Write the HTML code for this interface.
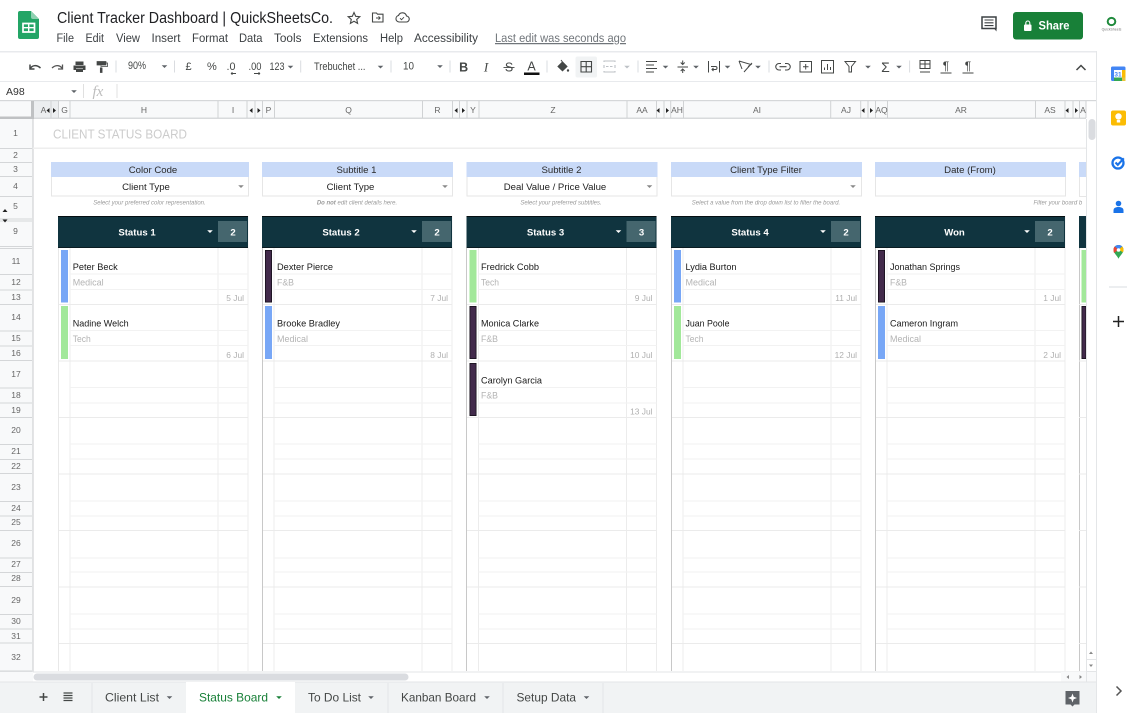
<!DOCTYPE html>
<html><head><meta charset="utf-8"><title>Client Tracker Dashboard</title>
<style>
html,body{margin:0;padding:0;width:1140px;height:713px;overflow:hidden;background:#fff}
svg{display:block;font-family:"Liberation Sans",sans-serif;filter:blur(.3px)}
.m{font-size:12.4px;fill:#3c4043}
.t{font-size:11px;fill:#444746}
.hd{font-size:8.5px;fill:#666;text-anchor:middle}
.rn{font-size:8.5px;fill:#666;text-anchor:middle}
.n{font-size:9.6px;fill:#1a1a1a}
.s{font-size:9.6px;fill:#b4b4b4}
.d{font-size:8.4px;fill:#b0b0b0;text-anchor:end}
.fh{font-size:9.6px;fill:#2a2a2a;text-anchor:middle}
.fv{font-size:9.6px;fill:#222;text-anchor:middle}
.h{font-size:6px;font-style:italic;fill:#9a9a9a;text-anchor:middle}
.bh{font-size:9.6px;font-weight:bold;fill:#fff;text-anchor:middle}
.tb{font-size:11.8px;fill:#444746}
.ic{fill:none;stroke:#444746;stroke-width:1.1}
.cr{fill:#5f6368}
</style></head><body>
<svg width="1140" height="713" viewBox="0 0 1140 713" xmlns="http://www.w3.org/2000/svg">
<defs>
<path id="c" d="M-2.800 -1.300h5.600l-2.800 2.800z"/>
<g id="col">
 <path d="M12 248V671M160 248V671M190 216V671" stroke="#ececec" fill="none"/>
 <path d="M0 304.500H190M0 361H190M0 417.500H190M0 474H190M0 530.500H190M0 587H190M0 643.500H190" stroke="#ebebeb" fill="none"/>
 <path d="M12 274H190M12 289.500H190M12 330.500H190M12 345.500H190M12 387.500H190M12 403H190M12 444H190M12 459H190M12 501H190M12 516H190M12 558H190M12 572H190M12 614H190M12 629H190" stroke="#f2f2f2" fill="none"/>
 <rect x="0" y="216" width="190" height="32" fill="#10343f"/>
 <rect x="0" y="216" width="190" height="1" fill="#050f12"/>
 <rect x="0" y="247" width="190" height="1" fill="#0a1c22"/>
 <rect x="160" y="221" width="29" height="21" fill="#45666e"/>
 <use href="#c" x="152" y="231.500" fill="#fff"/>
</g>
<g id="flt">
 <rect x="0.500" y="162.500" width="190" height="33.500" fill="#fff" stroke="#e6e6e6"/>
 <rect x="0" y="162" width="191" height="15" fill="#c9daf8"/>
</g>
</defs>

<rect width="1140" height="713" fill="#fff"/>

<!-- top -->
<path d="M20 11h11l8 8v18a2 2 0 0 1-2 2H20a2 2 0 0 1-2-2V13a2 2 0 0 1 2-2z" fill="#23a566"/>
<path d="M31 11l8 8h-6a2 2 0 0 1-2-2z" fill="#8ed1b1"/>
<path d="M23 23.500h11.500v8.500H23z" fill="none" stroke="#fff" stroke-width="1.700"/>
<path d="M28.700 23.500v8.500M23 27.700h11.500" stroke="#fff" stroke-width="1.400"/>
<text x="57" y="23" font-size="15.500" fill="#202124" textLength="276" lengthAdjust="spacingAndGlyphs">Client Tracker Dashboard | QuickSheetsCo.</text>
<path d="M354 12.500l1.700 3.800 4.100.4-3.100 2.700.9 4-3.600-2.100-3.600 2.100.9-4-3.100-2.700 4.100-.4z" class="ic"/>
<path d="M372.500 13h4l1 1.200h5.500v7.800h-10.500z" class="ic"/><path d="M376 18h4M378.500 16.300l1.700 1.700-1.700 1.700" class="ic" style="stroke-width:.9"/>
<path d="M399 22h7a3 3 0 0 0 .5-6 4.200 4.200 0 0 0-8-.5 3.300 3.300 0 0 0 .5 6.500z" class="ic"/><path d="M400 18.200l1.500 1.500 2.500-2.500" class="ic" style="stroke-width:.9"/>

<text class="m" x="56.500" y="42" textLength="17.500" lengthAdjust="spacingAndGlyphs">File</text>
<text class="m" x="85.500" y="42" textLength="18.500" lengthAdjust="spacingAndGlyphs">Edit</text>
<text class="m" x="116" y="42" textLength="24" lengthAdjust="spacingAndGlyphs">View</text>
<text class="m" x="151.500" y="42" textLength="29" lengthAdjust="spacingAndGlyphs">Insert</text>
<text class="m" x="192" y="42" textLength="36" lengthAdjust="spacingAndGlyphs">Format</text>
<text class="m" x="239" y="42" textLength="23.500" lengthAdjust="spacingAndGlyphs">Data</text>
<text class="m" x="274" y="42" textLength="27.500" lengthAdjust="spacingAndGlyphs">Tools</text>
<text class="m" x="313" y="42" textLength="55" lengthAdjust="spacingAndGlyphs">Extensions</text>
<text class="m" x="380" y="42" textLength="23" lengthAdjust="spacingAndGlyphs">Help</text>
<text class="m" x="414" y="42" textLength="64" lengthAdjust="spacingAndGlyphs">Accessibility</text>
<text class="m" x="495" y="42" textLength="131" lengthAdjust="spacingAndGlyphs" style="fill:#70757a" text-decoration="underline">Last edit was seconds ago</text>

<path d="M982 17h14v11.500h-14z" fill="none" stroke="#3c4043" stroke-width="1.500"/><path d="M994 28.500l2.500 3v-3z" fill="#3c4043"/><path d="M984.500 20h9M984.500 22.800h9M984.500 25.600h9" stroke="#3c4043" stroke-width="1.100"/>
<rect x="1013" y="12" width="70" height="27.500" rx="3" fill="#188038"/>
<rect x="1024" y="24.500" width="7.500" height="6.500" rx="1" fill="#fff"/><path d="M1025.800 24.500v-1.500a2 2 0 0 1 4 0v1.500" fill="none" stroke="#fff" stroke-width="1.100"/>
<text x="1038.500" y="29.500" font-size="12px" font-weight="bold" fill="#fff" textLength="31" lengthAdjust="spacingAndGlyphs">Share</text>
<ellipse cx="1111.500" cy="21.500" rx="3.800" ry="3.600" fill="none" stroke="#1f8a3c" stroke-width="2"/>
<text x="1111.500" y="30.500" font-size="3.500" fill="#777" text-anchor="middle">QuickSheets</text>

<!-- separators -->
<rect x="0" y="51" width="1096" height="1.500" fill="#e8eaed"/>
<rect x="0" y="81" width="1096" height="1" fill="#e8eaed"/>
<rect x="1096" y="51" width="1" height="662" fill="#e4e6e8"/>

<!-- toolbar -->
<path d="M30 69c2-4 6.500-4.500 10.500-1M30 64.500v4.500h4.500" fill="none" stroke="#444746" stroke-width="1.500"/>
<path d="M62.500 69c-2-4-6.500-4.500-10.500-1M62.500 64.500v4.500h-4.500" fill="none" stroke="#555" stroke-width="1.300"/>
<path d="M75.500 65h8v-3.500h-8zM73.500 65.500h12v4.500h-2.500v-1.500h-7v1.500h-2.500z" fill="#444746"/><path d="M76 69h7v3h-7z" fill="#444746"/>
<path d="M97 61.500h9v3.500h-9zM101 65.500v2M100.300 68h1.800v4.500h-1.800z" fill="#444746" stroke="#444746" stroke-width=".7"/><path d="M106 63h1.500v3.500h-6" fill="none" stroke="#444746" stroke-width=".8"/>
<path d="M116 60.500v12M174.500 60.500v12M300.700 60.500v12M391 60.500v12M450 60.500v12M547 60.500v12M638 60.500v12M769 60.500v12M909.600 60.500v12" stroke="#dadce0"/>
<text class="t" x="128" y="69" textLength="18" lengthAdjust="spacingAndGlyphs">90%</text><use href="#c" x="164.500" y="66.500" class="cr"/>
<text class="t" x="185.500" y="70">£</text><text class="t" x="207" y="70" font-size="10">%</text>
<text class="t" x="226.500" y="70" textLength="9" lengthAdjust="spacingAndGlyphs">.0</text><path d="M231 73.500h5M231 73.500l1.500-1.200M231 73.500l1.500 1.200" stroke="#444746" stroke-width=".9" fill="none"/>
<text class="t" x="248.500" y="70" textLength="13" lengthAdjust="spacingAndGlyphs">.00</text><path d="M254 73.500h6M260 73.500l-1.500-1.200M260 73.500l-1.500 1.200" stroke="#444746" stroke-width=".9" fill="none"/>
<text class="t" x="269.500" y="70" font-size="10.500" textLength="15" lengthAdjust="spacingAndGlyphs">123</text><use href="#c" x="290.500" y="67" class="cr"/>
<text class="t" x="314" y="70" font-size="10" textLength="51.500" lengthAdjust="spacingAndGlyphs">Trebuchet ...</text><use href="#c" x="380.500" y="67" class="cr"/>
<text class="t" x="403" y="69.500" textLength="11" lengthAdjust="spacingAndGlyphs">10</text><use href="#c" x="440" y="66.500" class="cr"/>
<text x="463.600" y="71.500" font-size="12.500" font-weight="bold" fill="#444746" text-anchor="middle">B</text>
<text x="486" y="71.500" font-size="13" font-style="italic" font-family="Liberation Serif" fill="#444746" text-anchor="middle">I</text>
<text x="509" y="71.500" font-size="12.500" fill="#444746" text-anchor="middle">S</text><path d="M503.500 67.500h11" stroke="#444746" stroke-width=".9"/>
<text x="531.600" y="70.500" font-size="12.500" fill="#444746" text-anchor="middle">A</text><rect x="524" y="72.500" width="15.500" height="2.500" fill="#111"/>
<path d="M558 66.500l4.500-4.500 4.500 4.500-4.500 4.300zM561 60l1.500 2" fill="#444746" stroke="#444746"/><circle cx="568" cy="70.500" r="1.200" fill="#444746"/>
<rect x="575.500" y="56.500" width="21.500" height="21" rx="2" fill="#f1f3f4"/>
<path d="M581 61.500h10.500v10.500H581zM586.200 61.500v10.500M581 66.700h10.500" fill="none" stroke="#444746" stroke-width="1.100"/>
<path d="M604 62v-1h11v1M604 71v1h11v-1M604 65v3M615 65v3M606 66.500h2.500M612.500 66.500h-2.500" fill="none" stroke="#bdc1c6" stroke-width="1.100"/><use href="#c" x="627" y="67" fill="#bdc1c6"/>
<path d="M646 61.500h11M646 65h8M646 68.500h11M646 72h8" stroke="#444746"/><use href="#c" x="665.500" y="67" class="cr"/>
<path d="M677.500 67h10.500M682.700 60.500v3.500M682.700 69.500v3.500M680.700 62.500l2 2 2-2M680.700 71l2-2 2 2" fill="none" stroke="#444746"/><use href="#c" x="696" y="67" class="cr"/>
<path d="M708.500 61v11.500M719.500 61v11.500M711 66.500h4.500a1.500 1.500 0 0 1 0 3h-3M713.500 68l-1.500 1.500 1.500 1.500" fill="none" stroke="#444746"/><use href="#c" x="727.500" y="67" class="cr"/>
<path d="M739 61l12 3.500-3 2M739 61l3 8M744 72l8-9" fill="none" stroke="#444746"/><use href="#c" x="758" y="67" class="cr"/>
<path d="M781 63.500h-2a3.200 3.200 0 0 0 0 6.500h2M785 63.500h2a3.200 3.200 0 0 1 0 6.500h-2M779.500 66.700h7" fill="none" stroke="#444746" stroke-width="1.100"/>
<path d="M800 61.500h11.500v10.500h-11.500zM805.700 64v5.500M803 66.700h5.500" fill="none" stroke="#444746"/>
<path d="M821.500 60.500h12v12.500h-12zM824.500 70v-2.500M827.500 70v-6M830.500 70v-3" fill="none" stroke="#444746"/>
<path d="M845 61.500h10.500l-4 5v5.500h-2.500v-5.500z" fill="none" stroke="#444746"/><use href="#c" x="868" y="67" class="cr"/>
<text x="885.500" y="72" font-size="14" fill="#444746" text-anchor="middle">Σ</text><use href="#c" x="899" y="67" class="cr"/>
<path d="M920 60.500h10v8h-10zM920 64h10M925 60.500v8M920 72h10" fill="none" stroke="#444746"/>
<text x="946" y="70" font-size="12" fill="#444746" text-anchor="middle">¶</text><path d="M940.500 73h11" stroke="#444746"/>
<text x="968" y="70" font-size="12" fill="#444746" text-anchor="middle">¶</text><path d="M962.500 73h11" stroke="#444746"/>
<path d="M1076.500 70l4.500-4.500 4.500 4.500" fill="none" stroke="#444746" stroke-width="1.500"/>

<!-- formula bar -->
<text x="6" y="95" font-size="10.500" fill="#333">A98</text><use href="#c" x="74" y="91.500" class="cr"/>
<path d="M83.500 84v14M117 84v14" stroke="#e0e0e0"/>
<text x="92.500" y="96" font-size="15" font-style="italic" font-family="Liberation Serif" fill="#bdbdbd">fx</text>

<!-- column headers -->
<rect x="0" y="100.500" width="1086" height="18" fill="#f8f9fa"/>
<rect x="33" y="101" width="25" height="17" fill="#eceef0"/>
<rect x="0" y="100" width="1096" height="1.200" fill="#d5d7d9"/>
<rect x="33" y="117.500" width="1053" height="1.500" fill="#d8dadc"/>
<rect x="0" y="116.500" width="33" height="3" fill="#bfc1c3"/>
<rect x="31" y="101" width="3" height="18" fill="#bfc1c3"/>
<path d="M51 101v17M58.500 101v17M70 101v17M218 101v17M247 101v17M255 101v17M262.500 101v17M274.500 101v17M422.500 101v17M452.500 101v17M459.500 101v17M467 101v17M479 101v17M627 101v17M656.500 101v17M664 101v17M670.700 101v17M683.500 101v17M830.700 101v17M860.700 101v17M868 101v17M875.500 101v17M887.500 101v17M1035.500 101v17M1065 101v17M1073 101v17M1079.500 101v17M1086 101v17" stroke="#d0d2d4"/>
<text class="hd" x="43.500" y="113">A</text><text class="hd" x="64.500" y="113">G</text><text class="hd" x="144" y="113">H</text><text class="hd" x="233" y="113">I</text><text class="hd" x="268.500" y="113">P</text><text class="hd" x="348.500" y="113">Q</text><text class="hd" x="437.500" y="113">R</text><text class="hd" x="473" y="113">Y</text><text class="hd" x="553" y="113">Z</text><text class="hd" x="642" y="113">AA</text><text class="hd" x="677" y="113">AH</text><text class="hd" x="757" y="113">AI</text><text class="hd" x="846" y="113">AJ</text><text class="hd" x="881.500" y="113">AQ</text><text class="hd" x="961" y="113">AR</text><text class="hd" x="1050" y="113">AS</text><text class="hd" x="1083" y="113">A</text>
<path d="M49.500 108l-3 2.500 3 2.500zM53 108l3 2.500-3 2.500zM252.500 108l-3 2.500 3 2.500zM257.500 108l3 2.500-3 2.500zM457.500 108l-3 2.500 3 2.500zM462 108l3 2.500-3 2.500zM659.500 108l-3 2.500 3 2.500zM666 108l3 2.500-3 2.500zM864.500 108l-3 2.500 3 2.500zM870 108l3 2.500-3 2.500zM1068.500 108l-3 2.500 3 2.500zM1075 108l3 2.500-3 2.500z" fill="#222"/>

<!-- row headers -->
<rect x="0" y="119" width="32.500" height="553" fill="#f8f9fa"/>
<rect x="32.500" y="119" width="1" height="553" fill="#c8cacc"/>
<path d="M0 148.500H32M0 162.500H32M0 176.500H32M0 196.500H32M0 219H32M0 221H32M0 246.500H32M0 248.500H32M0 274.500H32M0 290H32M0 304.500H32M0 331H32M0 346H32M0 360.500H32M0 388H32M0 403H32M0 417.500H32M0 444.500H32M0 459.500H32M0 473.500H32M0 501.500H32M0 516H32M0 530.500H32M0 558H32M0 572.500H32M0 586.500H32M0 614.500H32M0 629H32M0 643H32M0 671H32" stroke="#d4d6d8"/>
<text class="rn" x="15.500" y="136">1</text><text class="rn" x="15.500" y="158">2</text><text class="rn" x="15.500" y="172">3</text><text class="rn" x="15.500" y="189">4</text><text class="rn" x="15.500" y="209">5</text><text class="rn" x="15.500" y="234">9</text>
<path d="M2.500 212l2.500-3 2.500 3zM2.500 219.500l2.500 3 2.500-3z" fill="#222"/>
<text class="rn" x="16" y="264">11</text><text class="rn" x="16" y="285">12</text><text class="rn" x="16" y="300">13</text><text class="rn" x="16" y="320">14</text><text class="rn" x="16" y="341">15</text><text class="rn" x="16" y="356">16</text><text class="rn" x="16" y="377">17</text><text class="rn" x="16" y="398">18</text><text class="rn" x="16" y="413">19</text><text class="rn" x="16" y="433">20</text><text class="rn" x="16" y="454">21</text><text class="rn" x="16" y="469">22</text><text class="rn" x="16" y="490">23</text><text class="rn" x="16" y="511">24</text><text class="rn" x="16" y="525">25</text><text class="rn" x="16" y="546">26</text><text class="rn" x="16" y="567">27</text><text class="rn" x="16" y="581">28</text><text class="rn" x="16" y="603">29</text><text class="rn" x="16" y="624">30</text><text class="rn" x="16" y="639">31</text><text class="rn" x="16" y="660">32</text>

<!-- sheet title -->
<text x="53" y="138.500" font-size="12.500" fill="#cccccc" textLength="134" lengthAdjust="spacingAndGlyphs">CLIENT STATUS BOARD</text>
<rect x="33" y="147.500" width="1053" height="1.500" fill="#eeeeee"/>

<!-- filters -->
<rect x="51.500" y="162.500" width="197" height="33.500" fill="#fff" stroke="#e6e6e6"/>
<rect x="51" y="162" width="198" height="15" fill="#c9daf8"/>
<use href="#flt" x="262"/><use href="#flt" x="466.500"/><use href="#flt" x="671"/><use href="#flt" x="875"/>
<rect x="1079" y="162" width="7" height="15" fill="#c9daf8"/><path d="M1079.500 177v19.500H1086" stroke="#e6e6e6" fill="none"/>
<text class="fh" x="153" y="173">Color Code</text><text class="fh" x="356.500" y="173">Subtitle 1</text><text class="fh" x="561.500" y="173">Subtitle 2</text><text class="fh" x="766" y="173">Client Type Filter</text><text class="fh" x="970" y="173">Date (From)</text>
<text class="fv" x="146" y="190">Client Type</text><text class="fv" x="350.500" y="190">Client Type</text><text class="fv" x="555" y="190">Deal Value / Price Value</text>
<g fill="#888"><use href="#c" x="241" y="186.500"/><use href="#c" x="445" y="186.500"/><use href="#c" x="649.500" y="186.500"/><use href="#c" x="853" y="186.500"/></g>
<text class="h" x="149.500" y="204.500">Select your preferred color representation.</text>
<text class="h" x="357" y="204.500"><tspan font-weight="bold">Do not</tspan> edit client details here.</text>
<text class="h" x="561" y="204.500">Select your preferred subtitles.</text>
<text class="h" x="766" y="204.500">Select a value from the drop down list to filter the board.</text>
<text x="1033.500" y="204.500" font-size="6" font-style="italic" fill="#9a9a9a">Filter your board b</text>

<!-- board columns -->
<use href="#col" x="58"/><use href="#col" x="262"/><use href="#col" x="466.500"/><use href="#col" x="671"/><use href="#col" x="875"/>
<path d="M58.500 248V671" stroke="#e8e8e8"/>
<path d="M262.500 248V671M466.500 248V671M671.500 248V671M875.500 248V671M1079.500 248V671" stroke="#c8c8c8"/>
<rect x="1079" y="216" width="7" height="32" fill="#10343f"/>
<path d="M1079 304.500h7M1079 361h7M1079 417.500h7M1079 474h7M1079 530.500h7M1079 587h7M1079 643.500h7" stroke="#ebebeb"/>

<text class="bh" x="137" y="235.500">Status 1</text><text class="bh" x="341" y="235.500">Status 2</text><text class="bh" x="545.500" y="235.500">Status 3</text><text class="bh" x="750" y="235.500">Status 4</text><text class="bh" x="954.500" y="235.500">Won</text>
<text class="bh" x="233" y="235.500">2</text><text class="bh" x="437" y="235.500">2</text><text class="bh" x="641.500" y="235.500">3</text><text class="bh" x="846" y="235.500">2</text><text class="bh" x="1050" y="235.500">2</text>

<!-- stripes -->
<g fill="#78a7f6">
<rect x="61" y="250" width="7" height="52.500"/><rect x="265" y="306" width="7" height="53"/><rect x="674" y="250" width="7" height="52.500"/><rect x="878" y="306" width="7" height="53"/>
</g>
<g fill="#a2e89a">
<rect x="61" y="306" width="7" height="53"/><rect x="469.500" y="250" width="7" height="52.500"/><rect x="674" y="306" width="7" height="53"/><rect x="1081.500" y="250" width="4.500" height="52.500"/>
</g>
<g fill="#422a4b" stroke="#16101a" stroke-width=".8">
<rect x="265.400" y="250.400" width="6.200" height="51.700"/><rect x="469.900" y="306.400" width="6.200" height="52.200"/><rect x="469.900" y="363.400" width="6.200" height="52.200"/><rect x="878.400" y="250.400" width="6.200" height="51.700"/><rect x="1081.900" y="306.400" width="4" height="52.200"/>
</g>

<!-- cards -->
<text class="n" x="72.700" y="270" textLength="45" lengthAdjust="spacingAndGlyphs">Peter Beck</text><text class="s" x="72.700" y="285.500" textLength="31" lengthAdjust="spacingAndGlyphs">Medical</text><text class="d" x="244" y="301">5 Jul</text>
<text class="n" x="72.700" y="326.500" textLength="56" lengthAdjust="spacingAndGlyphs">Nadine Welch</text><text class="s" x="72.700" y="342" textLength="18" lengthAdjust="spacingAndGlyphs">Tech</text><text class="d" x="244" y="358">6 Jul</text>
<text class="n" x="277" y="270" textLength="56" lengthAdjust="spacingAndGlyphs">Dexter Pierce</text><text class="s" x="277" y="285.500" textLength="17" lengthAdjust="spacingAndGlyphs">F&amp;B</text><text class="d" x="448" y="301">7 Jul</text>
<text class="n" x="277" y="326.500" textLength="63" lengthAdjust="spacingAndGlyphs">Brooke Bradley</text><text class="s" x="277" y="342" textLength="31" lengthAdjust="spacingAndGlyphs">Medical</text><text class="d" x="448" y="358">8 Jul</text>
<text class="n" x="481" y="270" textLength="58" lengthAdjust="spacingAndGlyphs">Fredrick Cobb</text><text class="s" x="481" y="285.500" textLength="18" lengthAdjust="spacingAndGlyphs">Tech</text><text class="d" x="652.500" y="301">9 Jul</text>
<text class="n" x="481" y="326.500" textLength="58" lengthAdjust="spacingAndGlyphs">Monica Clarke</text><text class="s" x="481" y="342" textLength="17" lengthAdjust="spacingAndGlyphs">F&amp;B</text><text class="d" x="652.500" y="358">10 Jul</text>
<text class="n" x="481" y="383.500" textLength="61" lengthAdjust="spacingAndGlyphs">Carolyn Garcia</text><text class="s" x="481" y="398.500" textLength="17" lengthAdjust="spacingAndGlyphs">F&amp;B</text><text class="d" x="652.500" y="414.500">13 Jul</text>
<text class="n" x="685.500" y="270" textLength="51" lengthAdjust="spacingAndGlyphs">Lydia Burton</text><text class="s" x="685.500" y="285.500" textLength="31" lengthAdjust="spacingAndGlyphs">Medical</text><text class="d" x="857" y="301">11 Jul</text>
<text class="n" x="685.500" y="326.500" textLength="44" lengthAdjust="spacingAndGlyphs">Juan Poole</text><text class="s" x="685.500" y="342" textLength="18" lengthAdjust="spacingAndGlyphs">Tech</text><text class="d" x="857" y="358">12 Jul</text>
<text class="n" x="890" y="270" textLength="70" lengthAdjust="spacingAndGlyphs">Jonathan Springs</text><text class="s" x="890" y="285.500" textLength="17" lengthAdjust="spacingAndGlyphs">F&amp;B</text><text class="d" x="1061" y="301">1 Jul</text>
<text class="n" x="890" y="326.500" textLength="68" lengthAdjust="spacingAndGlyphs">Cameron Ingram</text><text class="s" x="890" y="342" textLength="31" lengthAdjust="spacingAndGlyphs">Medical</text><text class="d" x="1061" y="358">2 Jul</text>

<!-- scrollbars -->
<rect x="1086" y="119" width="10" height="553" fill="#fff"/>
<rect x="1086" y="119" width="1" height="563" fill="#e3e5e7"/>
<rect x="1088.500" y="119" width="7" height="21" rx="3.500" fill="#dadce0"/>
<rect x="0" y="671.500" width="1086" height="1" fill="#e3e5e7"/>
<rect x="0" y="672" width="33" height="10" fill="#f8f9fa"/>
<rect x="33.500" y="673.500" width="375" height="7" rx="3.500" fill="#dadce0"/>
<rect x="1061" y="672" width="35" height="10" fill="#f8f9fa"/>
<path d="M1086.500 647v35M1086 659.500h10M1086 671.500h10" stroke="#e3e5e7"/>
<path d="M1069 675l-2.500 2 2.500 2zM1079.500 675l2.500 2-2.500 2zM1089 654l2-2.500 2 2.500zM1089 664.500l2 2.500 2-2.500z" fill="#888"/>

<!-- tab bar -->
<rect x="0" y="682" width="1096" height="31" fill="#f1f3f4"/>
<rect x="0" y="681.500" width="1096" height="1" fill="#e3e5e7"/>
<path d="M39.500 697h8M43.500 693v8" stroke="#444746" stroke-width="1.500"/>
<path d="M63.500 693h9M63.500 695.500h9M63.500 698h9M63.500 700.500h9" stroke="#444746" stroke-width="1.300"/>
<path d="M92 683v30M388 683v30M503 683v30M603 683v30" stroke="#e3e5e7"/>
<rect x="186" y="682" width="109" height="31" fill="#fff"/>
<text class="tb" x="105" y="701.500" textLength="54" lengthAdjust="spacingAndGlyphs">Client List</text><use href="#c" x="169.500" y="697.500" class="cr"/>
<text class="tb" x="199" y="701.500" textLength="69" lengthAdjust="spacingAndGlyphs" style="fill:#188038">Status Board</text><use href="#c" x="279" y="697.500" fill="#188038"/>
<text class="tb" x="308" y="701.500" textLength="53" lengthAdjust="spacingAndGlyphs">To Do List</text><use href="#c" x="371" y="697.500" class="cr"/>
<text class="tb" x="401" y="701.500" textLength="75" lengthAdjust="spacingAndGlyphs">Kanban Board</text><use href="#c" x="487" y="697.500" class="cr"/>
<text class="tb" x="516.500" y="701.500" textLength="59.500" lengthAdjust="spacingAndGlyphs">Setup Data</text><use href="#c" x="586.500" y="697.500" class="cr"/>
<path d="M1065.500 691h14v13.500h-5l-2 2-2-2h-5z" fill="#5f6368"/>
<path d="M1072.500 693.500l1.200 3.300 3.300 1.200-3.300 1.200-1.200 3.300-1.200-3.300-3.300-1.200 3.300-1.200z" fill="#fff"/>

<!-- side panel -->
<rect x="1111" y="66.500" width="14.500" height="14.500" rx="1.500" fill="#4285f4"/>
<rect x="1122" y="70" width="3.500" height="8" fill="#fbbc04"/>
<rect x="1114" y="77.500" width="8" height="3.500" fill="#34a853"/>
<rect x="1122" y="77.500" width="3.500" height="3.500" fill="#e8c53a"/>
<rect x="1114" y="70" width="8" height="7.500" fill="#fff"/>
<text x="1118" y="76.300" font-size="6.500" font-weight="bold" fill="#4285f4" text-anchor="middle">31</text>
<rect x="1111" y="110.500" width="15" height="15" rx="2" fill="#fbbc04"/>
<circle cx="1118.500" cy="116.500" r="3.200" fill="#fff"/><rect x="1116.800" y="120" width="3.400" height="2.500" fill="#fff"/>
<circle cx="1118" cy="163" r="5.500" fill="none" stroke="#1a73e8" stroke-width="2.300"/>
<path d="M1115.500 162.500l2.300 2.300 6-6.500" fill="none" stroke="#1a73e8" stroke-width="2.100"/>
<circle cx="1118.500" cy="203.500" r="2.800" fill="#1a73e8"/><path d="M1113.500 213v-2.500c0-2.500 2-3.500 5-3.500s5 1 5 3.500v2.500z" fill="#1a73e8"/>
<path d="M1118.500 245c3 0 5 2.200 5 4.800 0 3.500-3.500 5.500-5 9-1.500-3.500-5-5.500-5-9 0-2.600 2-4.800 5-4.800z" fill="#34a853"/>
<path d="M1118.500 245c-1.500 0-2.800.6-3.700 1.500l3.700 3.300 3.700-3.300c-.9-.9-2.200-1.500-3.700-1.500z" fill="#4285f4"/>
<path d="M1113.500 249.800c0-1.300.5-2.500 1.300-3.300l3.700 3.300-4.500 3.200c-.3-1-.5-2-.5-3.200z" fill="#ea4335"/>
<path d="M1123.500 249.800c0-1.300-.5-2.500-1.300-3.300l-3.700 3.300 4.500 2.500c.3-.8.5-1.500.5-2.500z" fill="#fbbc04"/>
<circle cx="1118.500" cy="250" r="1.800" fill="#fff"/>
<rect x="1109" y="286.500" width="18" height="1" fill="#dadce0"/>
<path d="M1113 321.500h11M1118.500 316v11" stroke="#222" stroke-width="1.500"/>
<path d="M1116.500 686.500l4.500 4.500-4.500 4.500" fill="none" stroke="#555" stroke-width="1.500"/>
</svg>
</body></html>
